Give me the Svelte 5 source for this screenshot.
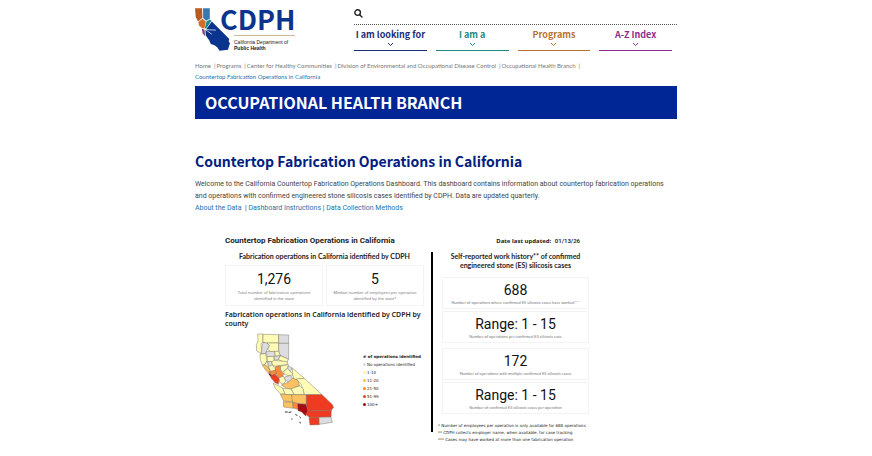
<script lang="ts">
    const menu = [
        { label: "I am looking for", tone: "navy" },
        { label: "I am a", tone: "teal" },
        { label: "Programs", tone: "bronze" },
        { label: "A-Z Index", tone: "plum" },
    ];

    const crumbs = [
        "Home",
        "Programs",
        "Center for Healthy Communities",
        "Division of Environmental and Occupational Disease Control",
        "Occupational Health Branch",
    ];

    const workHistory = [
        {
            value: "688",
            label: "Number of operations where confirmed ES silicosis cases have worked***",
        },
        {
            value: "Range: 1 - 15",
            label: "Number of operations per confirmed ES silicosis case",
        },
        {
            value: "172",
            label: "Number of operations with multiple confirmed ES silicosis cases",
        },
        {
            value: "Range: 1 - 15",
            label: "Number of confirmed ES silicosis cases per operation",
        },
    ];

    const legend = [
        { label: "No operations identified", color: "#dcdce0" },
        { label: "1-10", color: "#fdf5a0" },
        { label: "11-20", color: "#fbc04f" },
        { label: "21-50", color: "#f58a35" },
        { label: "51-99", color: "#dc4a1c" },
        { label: "100+", color: "#a3090c" },
    ];

    const none = "#dcdce1";
    const few = "#fdfbb4";
    const some = "#fdc161";
    const many = "#f98a3c";
    const lots = "#ee3b22";
    const most = "#a80a10";

    const counties = [
        { fill: few, d: "M50 27H66V50L60 58L62 72L60 86L47 78L46 60L51 48Z" },
        { fill: few, d: "M66 28L113 29V54H78L66 52Z" },
        { fill: none, d: "M113 29L143 30V55H113Z" },
        { fill: few, d: "M78 54H113V79L90 80L80 74L85 62Z" },
        { fill: none, d: "M113 55H143V103L132 98L118 92L113 79Z" },
        { fill: none, d: "M66 52L78 54L85 62L78 74L74 86L62 86L62 72Z" },
        { fill: few, d: "M57 87L74 86L78 108L72 118L64 120L58 104Z" },
        { fill: none, d: "M75 80L101 79L103 94L78 95Z" },
        { fill: few, d: "M101 79L113 79L118 92L103 94Z" },
        { fill: few, d: "M78 95L98 94L100 110L80 110Z" },
        { fill: none, d: "M100 94L118 92L112 104L100 106Z" },
        { fill: few, d: "M118 92L142 102L138 114L112 104Z" },
        { fill: none, d: "M80 110L92 110L95 124L82 124Z" },
        { fill: few, d: "M92 110L100 106L138 110L140 118L104 124L95 122Z" },
        { fill: some, d: "M64 120L76 122L88 136L84 146L74 136Z" },
        { fill: few, d: "M72 118L78 108L82 124L88 136L76 122Z" },
        { fill: few, d: "M82 124L95 120L104 134L98 142L88 138Z" },
        { fill: many, d: "M104 124L118 122L119 137L128 146L124 157L112 158L103 142Z" },
        { fill: few, d: "M119 123L143 119L140 129L126 140L119 136Z" },
        { fill: none, d: "M142 123L154 129L147 140L139 132Z" },
        { fill: few, d: "M128 140L140 130L148 140L158 148L146 153L130 148Z" },
        { fill: none, d: "M131 156L148 151L155 160L143 171L131 164Z" },
        { fill: few, d: "M112 158L128 154L134 168L126 178L116 172Z" },
        { fill: few, d: "M154 129L190 160L160 164L155 151Z" },
        { fill: few, d: "M165 162L190 160L243 209H190L181 179Z" },
        { fill: some, d: "M121 180L144 170L155 159L170 166L176 182L160 187L150 193L137 190Z" },
        { fill: few, d: "M97 175L108 180L127 190L132 206L119 207L103 190Z" },
        { fill: few, d: "M125 190L150 192L160 209H133Z" },
        { fill: few, d: "M150 191L176 183L187 192L189 209H160Z" },
        { fill: lots, d: "M84 145L97 142L103 148L115 162L112 178L101 172L91 160Z" },
        { fill: many, d: "M84 140L104 135L106 146L92 151Z" },
        { fill: some, d: "M118 208L155 209L155 231L128 228Z" },
        { fill: some, d: "M152 209H196V238L168 235L154 230Z" },
        { fill: some, d: "M127 230L155 232L157 250L128 246Z" },
        { fill: many, d: "M155 232L170 236L171 253L157 249Z" },
        { fill: most, d: "M170 236L196 238L201 257L194 273L181 260L171 257Z" },
        { fill: lots, d: "M196 209H243L273 238L278 247L271 256L201 258L196 239Z" },
        { fill: lots, d: "M201 258L271 256L270 276L207 278L194 268Z" },
        { fill: lots, d: "M204 278L234 277L235 299L207 300Z" },
        { fill: none, d: "M234 277L270 276L274 292L235 298Z" },
    ];
</script>

<div class="page">
    <header class="top">
        <a class="logo" href="#home" aria-label="California Department of Public Health">
            <svg viewBox="0 0 104 128" aria-hidden="true">
                <path fill="#b65b22" d="M0 1H21L22 29L9 40L2 27Z" />
                <path fill="#3c78b0" d="M24 1H44V32L33 38L24 30Z" />
                <path fill="#d26d27" d="M10 42L22 32L32 40L28 60L21 60L12 52Z" />
                <path fill="#168b91" d="M34 40L44 34L49 38L33 61L29 60Z" />
                <path fill="#7b417c" d="M20 62L28 64L30 84L23 76Z" />
                <path
                    fill="#0b348f"
                    d="M31 66L50 40L102 92L100 99L104 105L98 124L73 127L66 117L58 111L47 107L42 96L32 82Z"
                />
                <path fill="none" stroke="#fff" stroke-width="2" d="M31 64L62 66M31 64L50 78" />
            </svg>
            <span class="logo-words">
                <span class="logo-name">CDPH</span>
                <span class="logo-dept">California Department of<br /><b>Public Health</b></span>
            </span>
        </a>

        <div class="tools">
            <button class="search" aria-label="Search">
                <svg viewBox="0 0 9 9" aria-hidden="true">
                    <circle cx="3.6" cy="3.6" r="2.8" />
                    <path d="M5.7 5.7L8.4 8.4" />
                </svg>
            </button>
            <nav class="menu">
                {#each menu as item}
                    <button class="menu-item {item.tone}">
                        {item.label}
                        <svg viewBox="0 0 7 5" aria-hidden="true"><path d="M1 1L3.5 3.5L6 1" /></svg>
                    </button>
                {/each}
            </nav>
        </div>
    </header>

    <nav class="crumbs" aria-label="Breadcrumb">
        {#each crumbs as crumb}
            <a href="#crumb">{crumb}</a><span class="bar">|</span>
        {/each}
        <a class="current" href="#current">Countertop Fabrication Operations in California</a>
    </nav>

    <div class="banner">OCCUPATIONAL HEALTH BRANCH</div>

    <main>
        <h1>Countertop Fabrication Operations in California</h1>
        <p class="intro">
            Welcome to the California Countertop Fabrication Operations Dashboard. This dashboard
            contains information about countertop fabrication operations and operations with
            confirmed engineered stone silicosis cases identified by CDPH. Data are updated quarterly.
        </p>
        <p class="links">
            <a href="#about">About the Data</a>&nbsp; | <a href="#instructions">Dashboard Instructions</a> |
            <a href="#methods">Data Collection Methods</a>
        </p>

        <section class="dashboard">
            <div class="dash-head">
                <h2>Countertop Fabrication Operations in California</h2>
                <p class="updated">Date last updated: <span>01/13/26</span></p>
            </div>

            <div class="dash-body">
                <div class="left">
                    <h3>Fabrication operations in California identified by CDPH</h3>
                    <div class="pair">
                        <div class="card">
                            <strong>1,276</strong>
                            <small>Total number of fabrication operations<br />identified in the state</small>
                        </div>
                        <div class="card">
                            <strong>5</strong>
                            <small>Median number of employees per operation<br />identified by the state*</small>
                        </div>
                    </div>
                    <h3 class="map-title">Fabrication operations in California identified by CDPH by county</h3>
                    <div class="map-row">
                        <svg class="map" viewBox="42 24 240 282" role="img" aria-label="Operations by county">
                            <g stroke="#77735f" stroke-width="1.4" stroke-linejoin="round">
                                {#each counties as county}
                                    <path d={county.d} fill={county.fill} />
                                {/each}
                            </g>
                            <path
                                fill="none"
                                stroke="#333"
                                stroke-width="3"
                                stroke-linecap="round"
                                d="M133 261H139M144 262L150 261M164 269L168 271M152 282H153M176 276L179 279M176 292L179 294M84 148L90 152"
                            />
                        </svg>
                        <div class="legend">
                            <b># of operations identified</b>
                            <ul>
                                {#each legend as entry}
                                    <li><i style="background: {entry.color}"></i>{entry.label}</li>
                                {/each}
                            </ul>
                        </div>
                    </div>
                </div>

                <div class="divider"></div>

                <div class="right">
                    <h3>Self-reported work history** of confirmed<br />engineered stone (ES) silicosis cases</h3>
                    <div class="stack">
                        {#each workHistory as stat}
                            <div class="card">
                                <strong>{stat.value}</strong>
                                <small>{stat.label}</small>
                            </div>
                        {/each}
                    </div>
                    <div class="notes">
                        <p>* Number of employees per operation is only available for 688 operations</p>
                        <p>** CDPH collects employer name, when available, for case tracking</p>
                        <p>*** Cases may have worked at more than one fabrication operation</p>
                    </div>
                </div>
            </div>
        </section>
    </main>
</div>

<style>
    :global(body) {
        background: #fff;
    }

    .page {
        max-width: 482px;
        margin: 0 auto;
        padding-top: 8px;
        font-family: "Noto Sans CJK SC", "Open Sans", sans-serif;
        color: #444;
    }

    h1,
    h2,
    h3,
    p,
    ul {
        margin: 0;
        padding: 0;
    }

    a {
        color: #1a74b0;
        text-decoration: none;
    }

    button {
        padding: 0;
        border: 0;
        background: none;
        font-family: inherit;
        cursor: pointer;
    }

    .top {
        display: flex;
        justify-content: space-between;
        height: 43px;
    }

    .logo {
        display: flex;
        align-items: flex-start;
    }

    .logo > svg {
        width: 35px;
        height: 43px;
    }

    .logo-words {
        display: flex;
        flex-direction: column;
        margin-left: -10px;
    }

    .logo-name {
        font-size: 27px;
        line-height: 27px;
        font-weight: 700;
        color: #0b348f;
        margin-top: -3px;
        margin-bottom: 3px;
    }

    .logo-dept {
        margin-left: 14px;
        padding-top: 3px;
        border-top: 1px solid #cdbb95;
        font-family: "Liberation Sans", sans-serif;
        font-size: 5px;
        line-height: 6px;
        color: #222;
    }

    .tools {
        width: 67%;
    }

    .search {
        display: block;
        width: 100%;
        height: 17px;
        border-bottom: 1px dotted #555;
        text-align: left;
    }

    .search svg {
        display: block;
        width: 9px;
        height: 9px;
        margin: 1px 0 6px;
        fill: none;
        stroke: #222;
        stroke-width: 1.4;
    }

    .menu {
        display: grid;
        grid-template-columns: repeat(4, 1fr);
        gap: 9px;
        padding-right: 5px;
    }

    .menu-item {
        height: 26px;
        border-bottom: 1px solid currentColor;
        font-size: 9px;
        line-height: 12px;
        font-weight: 700;
        white-space: nowrap;
    }

    .menu-item svg {
        display: block;
        width: 7px;
        height: 5px;
        margin: 1px auto 0;
        fill: none;
        stroke: currentColor;
    }

    .navy {
        color: #1b2f78;
    }

    .teal {
        color: #1b8a82;
    }

    .bronze {
        color: #b8732e;
    }

    .plum {
        color: #8c2c8c;
    }

    .crumbs {
        margin-top: 9px;
        font-family: Lato, sans-serif;
        font-size: 6px;
        line-height: 11px;
    }

    .crumbs a {
        color: #777;
    }

    .crumbs .bar {
        margin: 0 1px 0 3px;
        color: #777;
    }

    .crumbs a.current {
        display: block;
        color: #1a74b0;
    }

    .banner {
        margin-top: 4px;
        padding: 0 10px;
        background: #002595;
        color: #fff;
        font-size: 16px;
        line-height: 33px;
        font-weight: 700;
    }

    h1 {
        margin-top: 32px;
        font-size: 14px;
        line-height: 20px;
        font-weight: 700;
        color: #002080;
    }

    .intro,
    .links {
        font-family: Roboto, sans-serif;
        font-size: 7px;
        line-height: 12px;
    }

    .intro {
        margin-top: 7px;
        padding-right: 8px;
    }

    .dashboard {
        max-width: 368px;
        margin: 21px 0 0 30px;
        font-family: "Noto Sans", sans-serif;
        color: #222;
    }

    .dash-head {
        display: flex;
        justify-content: space-between;
        align-items: center;
        padding-right: 13px;
    }

    h2 {
        font-family: Roboto, sans-serif;
        font-size: 8px;
        line-height: 12px;
        font-weight: 700;
    }

    .updated {
        font-size: 6px;
        line-height: 12px;
        font-weight: 700;
    }

    .updated span {
        margin-left: 2px;
        font-family: Roboto, sans-serif;
        font-weight: 600;
    }

    .dash-body {
        display: grid;
        grid-template-columns: 201fr 2px 155fr;
        gap: 5px;
        margin-top: 5px;
    }

    .left {
        padding-right: 2px;
    }

    h3 {
        font-family: Lato, sans-serif;
        font-size: 7px;
        line-height: 9px;
        font-weight: 700;
        text-align: center;
    }

    .divider {
        height: 180px;
        background: #000;
    }

    .pair {
        display: grid;
        grid-template-columns: 1fr 1fr;
        gap: 3px;
        margin-top: 4px;
    }

    .card {
        box-sizing: border-box;
        border: 1px solid #f3f3f3;
        text-align: center;
    }

    .card strong {
        display: block;
        font-family: Roboto, sans-serif;
        font-size: 14px;
        line-height: 16px;
        font-weight: 400;
        color: #111;
    }

    .card small {
        display: block;
        font-size: 4px;
        line-height: 6px;
        color: #777;
        white-space: nowrap;
    }

    .pair .card {
        height: 41px;
        padding-top: 5px;
    }

    .pair small {
        padding-top: 3px;
    }

    .left .map-title {
        margin-top: 4px;
        font-family: "Noto Sans", sans-serif;
        font-weight: 600;
        text-align: left;
    }

    .map-row {
        display: flex;
        align-items: flex-start;
        gap: 28px;
        margin: 5px 0 0 30px;
    }

    .map {
        width: 80px;
        height: 94px;
    }

    .legend {
        margin-top: 20px;
        font-family: "DejaVu Sans", sans-serif;
        font-size: 4px;
        line-height: 7px;
        white-space: nowrap;
    }

    .legend ul {
        list-style: none;
    }

    .legend li {
        display: flex;
        align-items: center;
        gap: 1px;
        height: 8px;
    }

    .legend i {
        width: 3px;
        height: 3px;
        border-radius: 50%;
    }

    .stack {
        display: grid;
        gap: 2px;
        margin: 7px 4px 0;
    }

    .stack .card {
        height: 32px;
        padding-top: 4px;
    }

    .stack .card:nth-child(3) {
        margin-top: 3px;
    }

    .stack small {
        padding-top: 2px;
        font-family: Lato, sans-serif;
    }

    .notes {
        margin-top: 8px;
        font-family: "DejaVu Sans", sans-serif;
        font-size: 4px;
        line-height: 7px;
        white-space: nowrap;
    }
</style>
